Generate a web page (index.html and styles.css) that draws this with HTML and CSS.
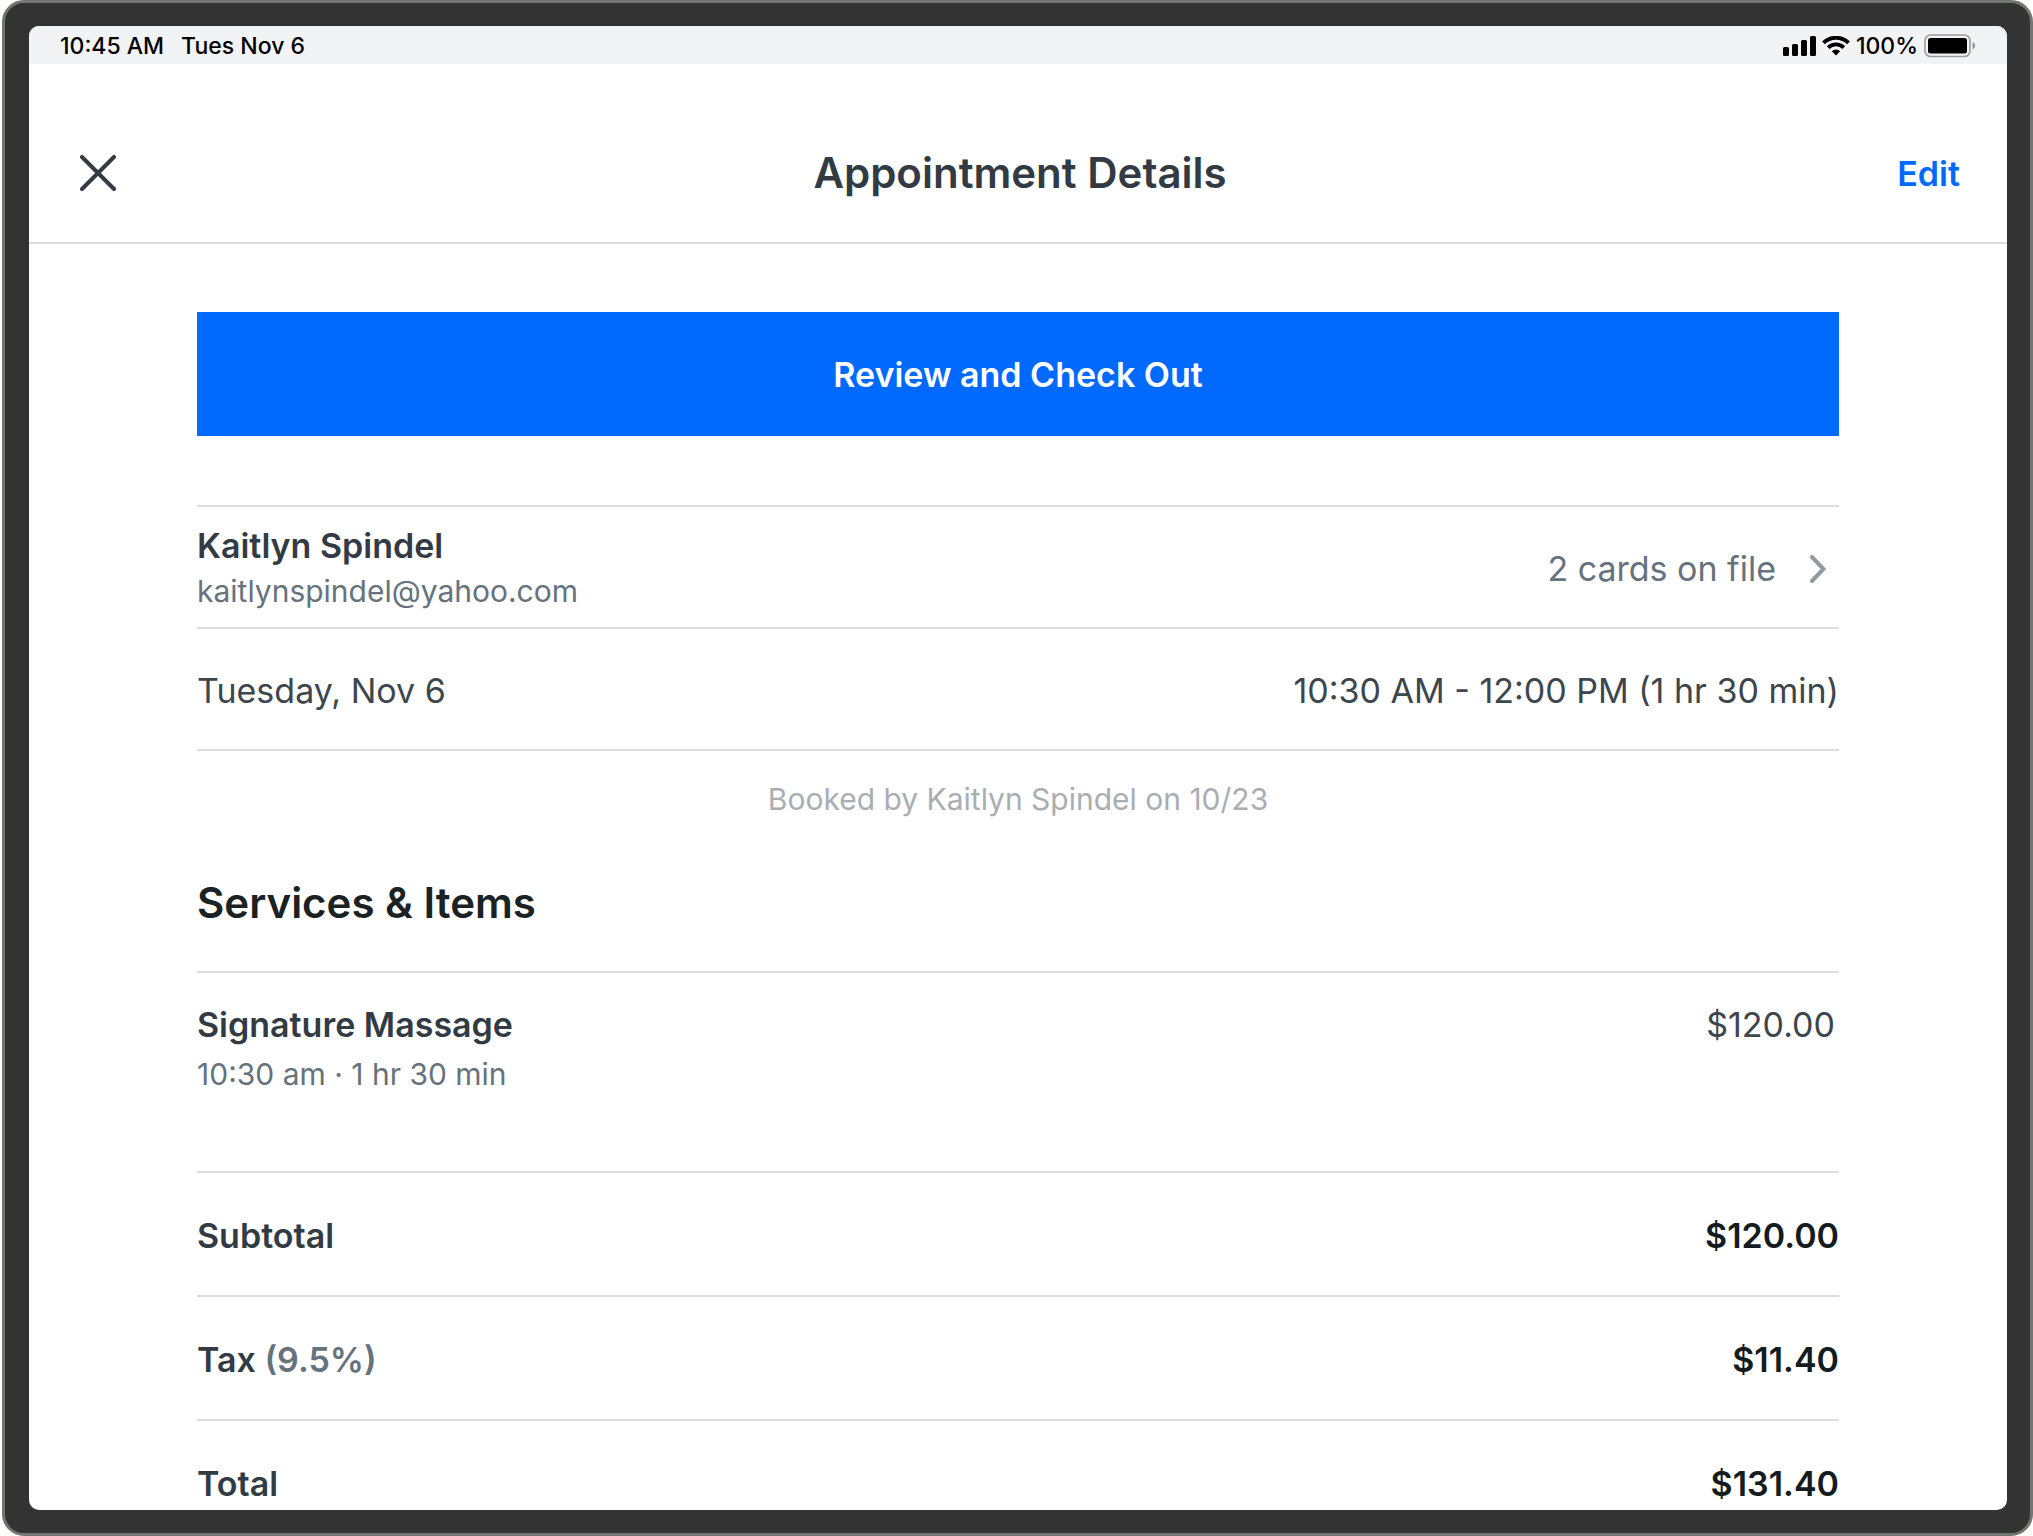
FILE: index.html
```html
<!DOCTYPE html>
<html lang="en">
<head>
    <meta charset="UTF-8">
    <meta name="viewport" content="width=device-width, initial-scale=1.0">
    <title>Appointment Details</title>
    <link rel="stylesheet" href="styles.css">
</head>
<body>
    <div class="device">
        <div class="screen">
            <div class="status">
                <span>10:45 AM</span>
                <span>Tues Nov 6</span>
                <div class="status-icons">
                    <svg width="33" height="20" viewBox="0 0 33 20" aria-hidden="true">
                        <rect x="0" y="11" width="6" height="9" rx="1.5"/>
                        <rect x="9" y="8" width="6" height="12" rx="1.5"/>
                        <rect x="18" y="4" width="6" height="16" rx="1.5"/>
                        <rect x="27" y="0" width="6" height="20" rx="1.5"/>
                    </svg>
                    <svg width="28" height="20" viewBox="0 0 28 20" aria-hidden="true">
                        <path d="M1.5 6.8a18 18 0 0 1 25 0M6.2 11.6a11.2 11.2 0 0 1 15.6 0" fill="none" stroke="#000" stroke-width="3.8"/>
                        <path d="M14 19.5l-4.2-4.2a6 6 0 0 1 8.4 0z"/>
                    </svg>
                    <span>100%</span>
                    <svg width="52" height="24" viewBox="0 0 52 24" aria-hidden="true">
                        <rect x="1" y="1" width="45" height="21.5" rx="5.5" fill="none" stroke="#999a9b" stroke-width="1.6"/>
                        <rect x="4" y="4" width="39" height="15.5" rx="2.5"/>
                        <path d="M48.5 8c3.6 1.4 3.6 6 0 7.4z" fill="#999a9b"/>
                    </svg>
                </div>
            </div>
            <header>
                <button class="close" aria-label="Close">
                    <svg width="36" height="36" viewBox="0 0 36 36" aria-hidden="true">
                        <path d="M2 2l32 32M34 2L2 34"/>
                    </svg>
                </button>
                <h1>Appointment Details</h1>
                <button class="edit">Edit</button>
            </header>
            <main>
                <button class="checkout">Review and Check Out</button>
                <div class="row">
                    <div>
                        <h3>Kaitlyn Spindel</h3>
                        <p class="sub">kaitlynspindel@yahoo.com</p>
                    </div>
                    <a class="cards" href="#">2 cards on file
                        <svg width="16" height="28" viewBox="0 0 16 28" aria-hidden="true">
                            <path d="M2 2l11.5 12L2 26"/>
                        </svg>
                    </a>
                </div>
                <div class="row">
                    <span>Tuesday, Nov 6</span>
                    <span>10:30 AM - 12:00 PM (1 hr 30 min)</span>
                </div>
                <div class="booked">Booked by Kaitlyn Spindel on 10/23</div>
                <h2>Services &amp; Items</h2>
                <div class="row service">
                    <div>
                        <h3>Signature Massage</h3>
                        <p class="sub">10:30 am · 1 hr 30 min</p>
                    </div>
                    <span class="price">$120.00</span>
                </div>
                <div class="row total">
                    <span>Subtotal</span>
                    <span class="amount">$120.00</span>
                </div>
                <div class="row total">
                    <span>Tax <span class="rate">(9.5%)</span></span>
                    <span class="amount">$11.40</span>
                </div>
                <div class="row total">
                    <span>Total</span>
                    <span class="amount">$131.40</span>
                </div>
            </main>
        </div>
    </div>
</body>
</html>
```
FILE: styles.css
```css
* {
    box-sizing: border-box;
}

body {
    margin: 0;
    background: #fff;
    color: #3d464d;
    font-family: Inter, "Liberation Sans", sans-serif;
    font-size: 34px;
    line-height: 44px;
}

h1, h2, h3, p {
    margin: 0;
}

h3 {
    color: #323b43;
    font-size: 34px;
    font-weight: 600;
}

button {
    padding: 0;
    border: none;
    background: none;
    font-family: inherit;
    font-size: 34px;
    font-weight: 600;
    cursor: pointer;
}

.device {
    height: 100vh;
    padding: 23px 23px 23px 24px;
    border: 3px solid #737573;
    border-radius: 22px;
    margin-left: 2px;
    background: #333;
}

.screen {
    height: 100%;
    overflow: hidden;
    border-radius: 10px;
    background: #fff;
}

.status {
    display: flex;
    align-items: center;
    gap: 17px;
    height: 38px;
    padding: 2px 31px 0;
    background: #f2f3f5;
    color: #000;
    font-size: 23px;
    font-weight: 500;
}

.status-icons {
    display: flex;
    align-items: center;
    gap: 6px;
    margin-left: auto;
}

header {
    display: grid;
    grid-template-columns: 1fr auto 1fr;
    align-items: center;
    height: 180px;
    padding: 40px 47px 0 51px;
    border-bottom: 2px solid #dcddde;
}

h1 {
    color: #323b43;
    font-size: 42px;
    font-weight: 600;
}

.close {
    justify-self: start;
    display: flex;
}

.close path, .cards path {
    fill: none;
    stroke: #323b43;
    stroke-width: 4;
    stroke-linecap: round;
}

.edit {
    justify-self: end;
    color: #006aff;
}

main {
    padding: 68px 168px 0;
}

.checkout {
    display: block;
    width: 100%;
    height: 124px;
    margin-bottom: 69px;
    background: #006aff;
    color: #fff;
}

.row {
    display: flex;
    align-items: center;
    justify-content: space-between;
    height: 122px;
    padding-top: 4px;
    border-top: 2px solid #dcddde;
}

.sub {
    color: #66727c;
    font-size: 30px;
    line-height: 46px;
}

.cards {
    display: flex;
    align-items: center;
    gap: 34px;
    padding-right: 13px;
    color: #66727c;
    text-decoration: none;
}

.cards path {
    stroke: #939ba2;
}

.booked {
    padding: 26px 0 32px;
    border-top: 2px solid #dcddde;
    color: #a9aeb3;
    font-size: 30px;
    text-align: center;
}

h2 {
    padding: 28px 0 46px;
    color: #1b2223;
    font-size: 42px;
    font-weight: 600;
}

.service {
    align-items: flex-start;
    height: 200px;
    padding-top: 30px;
}

.service .sub {
    margin-top: 4px;
}

.price {
    padding-right: 4px;
}

.total {
    height: 124px;
    color: #323b43;
    font-weight: 600;
}

.rate {
    color: #66727c;
}

.amount {
    color: #141c20;
}
```
